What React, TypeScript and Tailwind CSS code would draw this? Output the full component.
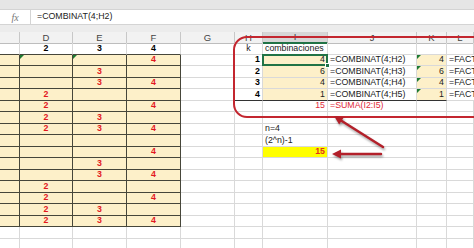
import clsx from 'clsx';

const GRID = 'grid grid-cols-[20px_53px_54px_54px_54px_28px_65px_89px_30px_1fr]';
const LIGHT = 'border-[#d9d9d9]';
const DARK = 'border-[#46463a]';
const TAN = 'bg-[#fdf0c9]';
const RED = 'text-[#e3171e]';

type Cell = { text?: string; cls?: string; border?: string; tri?: boolean; sel?: boolean };

function GridCell({ c }: { c: Cell }) {
  return (
    <div
      className={clsx(
        'relative flex items-end whitespace-nowrap border-r border-b px-[2px] pb-[1px] leading-none',
        c.border ?? LIGHT,
        c.cls
      )}
    >
      {c.tri && (
        <span className="absolute left-0 top-0 border-t-[4px] border-r-[4px] border-t-[#1d7a33] border-r-transparent" />
      )}
      {c.sel && (
        <>
          <span className="absolute z-10 -left-px -top-px -right-px -bottom-px border-2 border-[#217346]" />
          <span className="absolute z-10 -right-[3px] -bottom-[3px] w-[5px] h-[5px] bg-[#217346] border border-white" />
        </>
      )}
      {c.text}
    </div>
  );
}

const combos = ['4', '6', '4', '1'];

function buildRow(r: number): Cell[] {
  const row: Cell[] = [];

  // left block: columns C..F
  if (r === 1) {
    row.push({ border: 'border-r-[#d9d9d9] border-b-[#46463a]' });
    ['2', '3', '4'].forEach((t) =>
      row.push({ text: t, cls: 'justify-center font-bold text-black', border: 'border-r-[#d9d9d9] border-b-[#46463a]' })
    );
  } else if (r <= 16) {
    const n = r - 1;
    const num = `${TAN} justify-center font-bold ${RED}`;
    row.push({ border: DARK, cls: TAN });
    row.push({ text: n & 4 ? '2' : '', cls: num, border: DARK, tri: r === 2 });
    row.push({ text: n & 2 ? '3' : '', cls: num, border: DARK, tri: r === 2 });
    row.push({ text: n & 1 ? '4' : '', cls: num, border: DARK });
  } else {
    row.push({}, {}, {}, {});
  }

  // G
  row.push({});

  // H..L
  if (r === 1) {
    row.push({ text: 'k', cls: 'justify-center text-[#222]' });
    row.push({ text: 'combinaciones', cls: 'text-[#222]' });
    row.push({}, {}, {});
  } else if (r <= 5) {
    const bottom = r === 5 ? 'border-r-[#d9d9d9] border-b-[#333333]' : LIGHT;
    const v = combos[r - 2];
    row.push({ text: String(r - 1), cls: 'justify-end font-bold text-black', border: bottom });
    row.push({ text: v, cls: `${TAN} justify-end text-[#222]`, border: bottom, sel: r === 2 });
    row.push({ text: `=COMBINAT(4;H${r})`, cls: 'text-[#222]', border: bottom });
    row.push({ text: v, cls: `${TAN} justify-end text-[#222]`, border: bottom, tri: true });
    row.push({ text: '=FACT(4)/(FACT(H' + r + ')*FACT(4-H' + r + '))', cls: 'text-[#222]' });
  } else if (r === 6) {
    row.push({});
    row.push({ text: '15', cls: 'justify-end text-[#e02a3a]' });
    row.push({ text: '=SUMA(I2:I5)', cls: 'text-[#e02a3a]' });
    row.push({}, {});
  } else if (r === 8 || r === 9) {
    row.push({});
    row.push({ text: r === 8 ? 'n=4' : '(2^n)-1', cls: 'text-[#222]' });
    row.push({}, {}, {});
  } else if (r === 10) {
    row.push({});
    row.push({ text: '15', cls: 'justify-end bg-[#ffff00] font-bold text-[#e3301c]' });
    row.push({}, {}, {});
  } else {
    row.push({}, {}, {}, {}, {});
  }

  return row;
}

const headers = ['', 'D', 'E', 'F', 'G', 'H', 'I', 'J', 'K', 'L'];

export default function App() {
  const rows = Array.from({ length: 18 }, (_, i) => buildRow(i + 1));

  return (
    <div className="relative w-[474px] h-[248px] overflow-hidden bg-white font-['Liberation_Sans',Arial,sans-serif]">
      {/* ribbon edge */}
      <div className="h-[9px] bg-[#e6e6e6]" />

      {/* formula bar */}
      <div className="flex h-[16px] border-y border-[#d4d4d4] bg-white">
        <div className="flex w-[31px] items-center justify-center border-r border-[#d4d4d4] font-['Liberation_Serif',serif] text-[10px] italic text-[#777]">
          fx
        </div>
        <div className="flex flex-1 items-center pl-[6px] text-[8.8px] text-[#222]">=COMBINAT(4;H2)</div>
      </div>

      <div className="h-[7px] bg-[#ececec]" />

      {/* column headers */}
      <div className={clsx(GRID, 'h-[11px] bg-[#f2f2f2]')}>
        {headers.map((h) => (
          <div
            key={h || 'c'}
            className={clsx(
              'flex items-center justify-center border-r border-[#c8c8c8] text-[9.5px] leading-none text-[#444]',
              h === 'I' ? 'bg-[#d6d6d6] border-b-2 border-b-[#217346]' : 'border-b border-b-[#bdbdbd]'
            )}
          >
            {h}
          </div>
        ))}
      </div>

      {/* cells */}
      {rows.map((row, ri) => (
        <div key={ri} className={clsx(GRID, 'h-[11.5px] text-[8.8px]')}>
          {row.map((c, ci) => (
            <GridCell key={ci} c={c} />
          ))}
        </div>
      ))}

      {/* red highlight box */}
      <div className="absolute left-[233px] top-[36px] h-[82px] w-[262px] rounded-[14px] border-2 border-[#c3262f]" />

      {/* arrows */}
      <svg
        className="absolute left-0 top-0 drop-shadow-[1px_2px_1px_rgba(0,0,0,0.35)]"
        width="474"
        height="248"
        viewBox="0 0 474 248"
      >
        <g stroke="#b3202a" strokeWidth="2.5" strokeLinecap="round" fill="#b3202a">
          <line x1="383" y1="147" x2="341" y2="120.5" />
          <polygon points="334,116 343.9,117.2 339.2,124.6" stroke="none" />
          <line x1="381" y1="154" x2="341" y2="154" />
          <polygon points="332,154 341,149.5 341,158.5" stroke="none" />
        </g>
      </svg>
    </div>
  );
}
